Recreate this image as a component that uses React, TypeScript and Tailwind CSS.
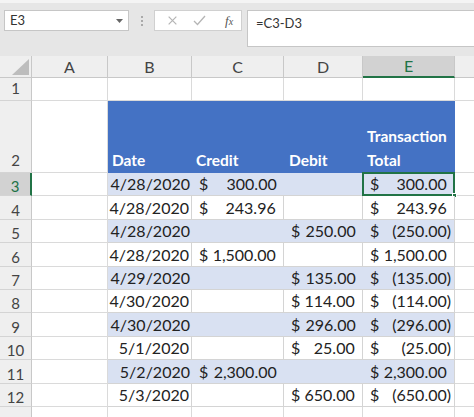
import React from 'react';

type Row = {
  n: number;
  date: string;
  credit?: string;
  debit?: string;
  total: string;
  neg?: boolean;
};

const rows: Row[] = [
  { n: 3, date: '4/28/2020', credit: '300.00', total: '300.00' },
  { n: 4, date: '4/28/2020', credit: '243.96', total: '243.96' },
  { n: 5, date: '4/28/2020', debit: '250.00', total: '250.00', neg: true },
  { n: 6, date: '4/28/2020', credit: '1,500.00', total: '1,500.00' },
  { n: 7, date: '4/29/2020', debit: '135.00', total: '135.00', neg: true },
  { n: 8, date: '4/30/2020', debit: '114.00', total: '114.00', neg: true },
  { n: 9, date: '4/30/2020', debit: '296.00', total: '296.00', neg: true },
  { n: 10, date: '5/1/2020', debit: '25.00', total: '25.00', neg: true },
  { n: 11, date: '5/2/2020', credit: '2,300.00', total: '2,300.00' },
  { n: 12, date: '5/3/2020', debit: '650.00', total: '650.00', neg: true },
];

// accounting format: $ on the left, number on the right, room kept for ")"
function Money({ value, neg }: { value?: string; neg?: boolean }) {
  if (!value) return null;
  return (
    <div className="flex w-full items-end justify-between pl-[7px] pr-[3px]">
      <span>$</span>
      <span>
        {neg ? `(${value})` : value}
        {!neg && <span className="invisible">)</span>}
      </span>
    </div>
  );
}

function RowHead({ n, active, h }: { n?: number; active?: boolean; h: string }) {
  return (
    <div
      className={`${h} w-[32px] shrink-0 flex items-end justify-center pb-[1px] text-[15px] border-b border-[#d4d4d4] ${
        active
          ? 'bg-[#d2d2d2] text-[#217346] border-r-2 border-r-[#217346]'
          : 'bg-[#efefef] text-[#444] border-r border-r-[#c8c8c8]'
      }`}
    >
      {n}
    </div>
  );
}

export default function App() {
  const cols = ['A', 'B', 'C', 'D', 'E'];
  const widths = ['w-[76px]', 'w-[84px]', 'w-[92px]', 'w-[79px]', 'w-[92px]'];

  return (
    <div
      className="w-[474px] h-[417px] overflow-hidden bg-white text-[#222]"
      style={{ fontFamily: 'Lato, "Open Sans", sans-serif' }}
    >
      {/* formula bar */}
      <div className="h-[56px] bg-[#e6e6e6] border-t-[3px] border-[#f4f4f4] pt-[7px] flex items-start">
        <div className="ml-[4px] w-[125px] h-[21px] bg-white border border-[#c6c6c6] flex items-center justify-between pl-[5px] pr-[5px] text-[13px] text-[#333]">
          <span>E3</span>
          <svg width="7" height="4" viewBox="0 0 7 4">
            <path d="M0 0 L7 0 L3.5 4 Z" fill="#666" />
          </svg>
        </div>
        <div className="w-[25px] h-[21px] flex flex-col items-center justify-center gap-[2px]">
          <span className="w-[2px] h-[2px] bg-[#aaa]" />
          <span className="w-[2px] h-[2px] bg-[#aaa]" />
          <span className="w-[2px] h-[2px] bg-[#aaa]" />
        </div>
        <div className="w-[88px] h-[21px] bg-white border border-[#d0d0d0] flex items-center pl-[12px] gap-[15px]">
          <svg width="11" height="11" viewBox="0 0 10 10">
            <path d="M1.5 1.5 L8.5 8.5 M8.5 1.5 L1.5 8.5" stroke="#b5b5b5" strokeWidth="1.1" />
          </svg>
          <svg width="13" height="11" viewBox="0 0 13 11">
            <path d="M1 6 L4.5 9.5 L12 1" stroke="#b5b5b5" strokeWidth="1.3" fill="none" />
          </svg>
          <span
            className="italic text-[13px] text-[#555] leading-none ml-[4px]"
            style={{ fontFamily: '"Liberation Serif", serif' }}
          >
            f<span className="text-[10px]">x</span>
          </span>
        </div>
        <div className="ml-[5px] flex-1 h-[37px] bg-white border-y border-l border-[#c6c6c6] pl-[8px] pt-[3px] text-[13px] text-[#333]">
          =C3-D3
        </div>
      </div>

      {/* column headers */}
      <div className="flex h-[22px]">
        <div className="w-[32px] shrink-0 bg-[#efefef] border-r border-b border-[#c8c8c8] flex items-end justify-end pr-[2px] pb-[2px]">
          <svg width="17" height="16" viewBox="0 0 17 16">
            <path d="M17 0 L17 16 L0 16 Z" fill="#bdbdbd" />
          </svg>
        </div>
        {cols.map((c, i) => (
          <div
            key={c}
            className={`${widths[i]} shrink-0 flex items-center justify-center text-[16px] ${
              c === 'E'
                ? 'bg-[#d2d2d2] text-[#217346] border-b-2 border-[#217346] border-r border-r-[#c8c8c8]'
                : 'bg-[#efefef] text-[#444] border-r border-b border-[#c8c8c8]'
            }`}
          >
            {c}
          </div>
        ))}
        <div className="flex-1 bg-[#efefef] border-b border-[#c8c8c8]" />
      </div>

      {/* row 1 */}
      <div className="flex">
        <RowHead n={1} h="h-[23px]" />
        {widths.map((w, i) => (
          <div key={i} className={`${w} shrink-0 h-[23px] border-r border-b border-[#dadada]`} />
        ))}
        <div className="flex-1 h-[23px] border-b border-[#dadada]" />
      </div>

      {/* row 2: table header */}
      <div className="flex">
        <RowHead n={2} h="h-[72px]" />
        <div className="w-[76px] shrink-0 h-[72px] border-r border-b border-[#dadada]" />
        <div className="w-[347px] shrink-0 h-[72px] bg-[#4472c4] text-white font-bold text-[15.5px] flex items-end leading-[24px] pb-[1px]">
          <div className="w-[84px] pl-[4px]">Date</div>
          <div className="w-[92px] pl-[4px]">Credit</div>
          <div className="w-[79px] pl-[5px]">Debit</div>
          <div className="w-[92px] pl-[4px]">
            Transaction
            <br />
            Total
          </div>
        </div>
        <div className="flex-1 h-[72px] border-b border-[#dadada]" />
      </div>

      {/* data rows */}
      {rows.map((r) => {
        const band = r.n % 2 === 1;
        const cell = band
          ? 'bg-[#d9e1f2] border-b border-[#d4d4d4]'
          : 'bg-white border-r border-b border-[#d4d4d4]';
        return (
          <div key={r.n} className="flex text-[16px] leading-none">
            <RowHead n={r.n} active={r.n === 3} h="h-[23.4px]" />
            <div className="w-[76px] shrink-0 h-[23.4px] border-r border-b border-[#dadada]" />
            <div className={`w-[84px] shrink-0 h-[23.4px] ${cell} flex items-end justify-end pr-[2px] pb-[3px]`}>
              {r.date}
            </div>
            <div className={`w-[92px] shrink-0 h-[23.4px] ${cell} flex items-end pb-[3px]`}>
              <Money value={r.credit} />
            </div>
            <div className={`w-[79px] shrink-0 h-[23.4px] ${cell} flex items-end pb-[3px]`}>
              <Money value={r.debit} />
            </div>
            <div className={`relative w-[92px] shrink-0 h-[23.4px] ${cell} border-r border-r-[#d4d4d4] flex items-end pb-[3px]`}>
              <Money value={r.total} neg={r.neg} />
              {r.n === 3 && (
                <>
                  <div className="absolute -left-[1px] -top-[1px] -right-[1px] -bottom-[1px] border-2 border-[#217346]" />
                  <div className="absolute -right-[3px] -bottom-[3px] w-[5px] h-[5px] bg-[#217346] border border-white" />
                </>
              )}
            </div>
            <div className="flex-1 h-[23.4px] border-b border-[#dadada]" />
          </div>
        );
      })}

      {/* row 13, cut off by the window */}
      <div className="flex">
        <RowHead h="h-[23px]" />
        {widths.map((w, i) => (
          <div key={i} className={`${w} shrink-0 h-[23px] border-r border-b border-[#dadada]`} />
        ))}
        <div className="flex-1 h-[23px] border-b border-[#dadada]" />
      </div>
    </div>
  );
}
